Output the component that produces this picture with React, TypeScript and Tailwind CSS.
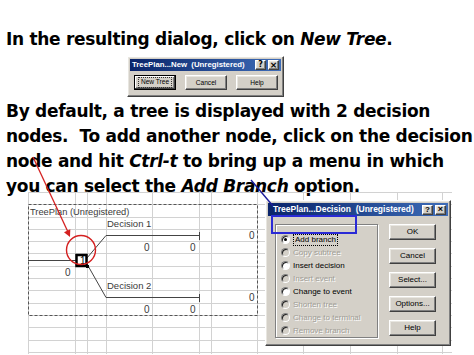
import React from "react";

const bevel =
  "border border-t-white border-l-white border-r-[#404040] border-b-[#404040] shadow-[inset_-1px_-1px_0_#808080,inset_1px_1px_0_#e8e6e0]";

function WinBtn({ children, className = "", def = false }: { children: React.ReactNode; className?: string; def?: boolean }) {
  return (
    <div
      className={
        "bg-[#d4d0c8] flex items-center justify-center text-black font-['Liberation_Sans',sans-serif] " +
        (def
          ? "border border-black shadow-[inset_-1px_-1px_0_#404040,inset_1px_1px_0_#fff,inset_-2px_-2px_0_#808080] "
          : bevel + " ") +
        className
      }
    >
      {children}
    </div>
  );
}

function TitleBtns() {
  return (
    <div className="flex gap-[2px] items-center">
      <div className={"w-[11px] h-[10px] bg-[#d4d0c8] flex items-center justify-center text-[8px] font-bold leading-none text-black " + bevel}>?</div>
      <div className={"w-[11px] h-[10px] bg-[#d4d0c8] flex items-center justify-center text-[9px] font-bold leading-none text-black " + bevel}>×</div>
    </div>
  );
}

function Radio({ label, enabled, checked }: { label: string; enabled: boolean; checked?: boolean }) {
  return (
    <div className="h-[13px] flex items-center gap-[3px]">
      <div
        className={
          "w-[9px] h-[9px] rounded-full border border-t-[#808080] border-l-[#808080] border-r-white border-b-white shadow-[inset_1px_1px_0_#202020] flex items-center justify-center " +
          (enabled ? "bg-white" : "bg-[#d4d0c8]")
        }
      >
        {checked && <div className="w-[3px] h-[3px] rounded-full bg-black" />}
      </div>
      <span
        className={
          "text-[8px] leading-none whitespace-nowrap " +
          (enabled ? "text-black" : "text-[#a09d96] [text-shadow:1px_1px_0_#fff]") +
          (checked ? " border border-dotted border-black px-[1px] py-[1px]" : "")
        }
      >
        {label}
      </span>
    </div>
  );
}

const cols = [28, 75, 87, 106, 152, 199, 211, 257, 303, 350, 397, 442];
const rows = [0, 12, 25, 37, 49, 61, 74, 86, 98, 111, 123, 135, 148, 160];

export default function App() {
  return (
    <div className="relative w-[474px] h-[355px] bg-white overflow-hidden font-['DejaVu_Sans',sans-serif] text-black">
      <div className="pt-[28px] pl-[6px] text-[17px] tracking-[-0.3px] leading-[22px] font-bold whitespace-nowrap">
        In the resulting dialog, click on <i>New Tree</i>.
      </div>

      {/* small dialog */}
      <div className={"ml-[127px] mt-[6px] w-[157px] h-[41px] bg-[#d4d0c8] p-[1px] " + bevel}>
        <div className="h-[12px] mx-[1px] mt-[1px] bg-linear-to-r from-[#0a246a] to-[#3f6db8] flex items-center justify-between pl-[2px] pr-[2px]">
          <span className="text-white font-bold text-[7.8px] leading-none whitespace-nowrap font-['Liberation_Sans',sans-serif]">
            TreePlan...New&nbsp; (Unregistered)
          </span>
          <TitleBtns />
        </div>
        <div className="flex gap-[9px] pl-[5px] pt-[4px]">
          <WinBtn def className="w-[42px] h-[15px] text-[6.6px]">
            <span className="border border-dotted border-[#333] px-[2px] leading-none py-[1px]">New Tree</span>
          </WinBtn>
          <WinBtn className="w-[42px] h-[15px] text-[6.6px]">Cancel</WinBtn>
          <WinBtn className="w-[42px] h-[15px] text-[6.6px]">Help</WinBtn>
        </div>
      </div>

      <div className="mt-[2px] pl-[6px] text-[17px] tracking-[-0.3px] leading-[25px] font-bold whitespace-nowrap">
        By default, a tree is displayed with 2 decision
        <br />
        nodes.&nbsp; To add another node, click on the decision
        <br />
        node and hit <i>Ctrl-t</i> to bring up a menu in which
        <br />
        you can select the <i>Add Branch</i> option.
      </div>

      {/* spreadsheet */}
      <div className="relative -mt-[7px] h-[162px] font-['Liberation_Sans',sans-serif] text-[#3a3a3a]">
        <svg className="absolute inset-0" width="474" height="162">
          {rows.map((y) => (
            <line key={"r" + y} x1="28" x2="452" y1={y + 0.5} y2={y + 0.5} stroke="#d2d2d2" strokeWidth="1" />
          ))}
          {cols.map((x) => (
            <line key={"c" + x} x1={x + 0.5} x2={x + 0.5} y1="0" y2="162" stroke="#d2d2d2" strokeWidth="1" />
          ))}
          <rect x="28.5" y="12.5" width="229" height="111" fill="none" stroke="#555" strokeWidth="1" strokeDasharray="3 2" />
          {/* tree */}
          <line x1="28" y1="68.5" x2="76" y2="68.5" stroke="#444" strokeWidth="1" />
          <polyline points="87,66 106,43.5 199,43.5" fill="none" stroke="#444" strokeWidth="1" />
          <line x1="199.5" y1="40" x2="199.5" y2="48" stroke="#444" strokeWidth="1" />
          <polyline points="87,72 106,105.5 199,105.5" fill="none" stroke="#444" strokeWidth="1" />
          <line x1="199.5" y1="102" x2="199.5" y2="110" stroke="#444" strokeWidth="1" />
          <rect x="76.5" y="63" width="10" height="11" fill="none" stroke="#000" strokeWidth="2.5" />
          <rect x="86" y="73" width="3" height="3" fill="#000" />
        </svg>
        <span className="absolute left-[30px] top-[15px] text-[9.3px] leading-[10px] whitespace-nowrap">TreePlan (Unregistered)</span>
        <span className="absolute left-[107px] top-[27px] text-[9.5px] leading-[10px] whitespace-nowrap">Decision 1</span>
        <span className="absolute left-[107px] top-[89px] text-[9.5px] leading-[10px] whitespace-nowrap">Decision 2</span>
        <span className="absolute left-[80px] top-[63px] text-[10px] leading-[11px] text-black">1</span>
        <span className="absolute left-[65px] top-[76px] text-[10px] leading-[10px]">0</span>
        <span className="absolute left-[144px] top-[51px] text-[10px] leading-[10px]">0</span>
        <span className="absolute left-[190px] top-[51px] text-[10px] leading-[10px]">0</span>
        <span className="absolute left-[249px] top-[39px] text-[10px] leading-[10px]">0</span>
        <span className="absolute left-[144px] top-[113px] text-[10px] leading-[10px]">0</span>
        <span className="absolute left-[190px] top-[113px] text-[10px] leading-[10px]">0</span>
        <span className="absolute left-[249px] top-[101px] text-[10px] leading-[10px]">0</span>

        {/* decision dialog */}
        <div className={"absolute left-[265px] top-[8px] w-[186px] h-[146px] bg-[#d4d0c8] p-[1px] " + bevel}>
          <div className="h-[13px] mx-[1px] mt-[1px] bg-linear-to-r from-[#0a246a] to-[#3f6db8] flex items-center justify-between pl-[5px] pr-[2px]">
            <span className="text-white font-bold text-[8.5px] leading-none whitespace-nowrap">
              TreePlan...Decision&nbsp; (Unregistered)
            </span>
            <TitleBtns />
          </div>
          <div className="flex pl-[8px] pt-[8px] gap-[11px]">
            <div className="w-[103px] h-[114px] border border-[#808080] shadow-[1px_1px_0_#fff,inset_1px_1px_0_#fff] pt-[8px] pl-[5px] flex flex-col">
              <Radio label="Add branch" enabled checked />
              <Radio label="Copy subtree" enabled={false} />
              <Radio label="Insert decision" enabled />
              <Radio label="Insert event" enabled={false} />
              <Radio label="Change to event" enabled />
              <Radio label="Shorten tree" enabled={false} />
              <Radio label="Change to terminal" enabled={false} />
              <Radio label="Remove branch" enabled={false} />
            </div>
            <div className="flex flex-col gap-[8px]">
              <WinBtn className="w-[47px] h-[16px] text-[8px]">OK</WinBtn>
              <WinBtn className="w-[47px] h-[16px] text-[8px]">Cancel</WinBtn>
              <WinBtn className="w-[47px] h-[16px] text-[8px]">Select...</WinBtn>
              <WinBtn className="w-[47px] h-[16px] text-[8px]">Options...</WinBtn>
              <WinBtn className="w-[47px] h-[16px] text-[8px]">Help</WinBtn>
            </div>
          </div>
        </div>
      </div>

      {/* annotations */}
      <svg className="absolute inset-0 pointer-events-none" width="474" height="355">
        <line x1="33" y1="157" x2="68" y2="232" stroke="#d42020" strokeWidth="1.3" />
        <polygon points="70,237 70.3,229.2 64,232.2" fill="#d42020" />
        <circle cx="81" cy="250" r="14.5" fill="none" stroke="#d42020" strokeWidth="1.4" />
        <line x1="251" y1="180" x2="273" y2="206" stroke="#1c1c9c" strokeWidth="1.4" />
        <rect x="272" y="216" width="84" height="17" fill="none" stroke="#2a2ad6" strokeWidth="2" />
      </svg>
    </div>
  );
}
